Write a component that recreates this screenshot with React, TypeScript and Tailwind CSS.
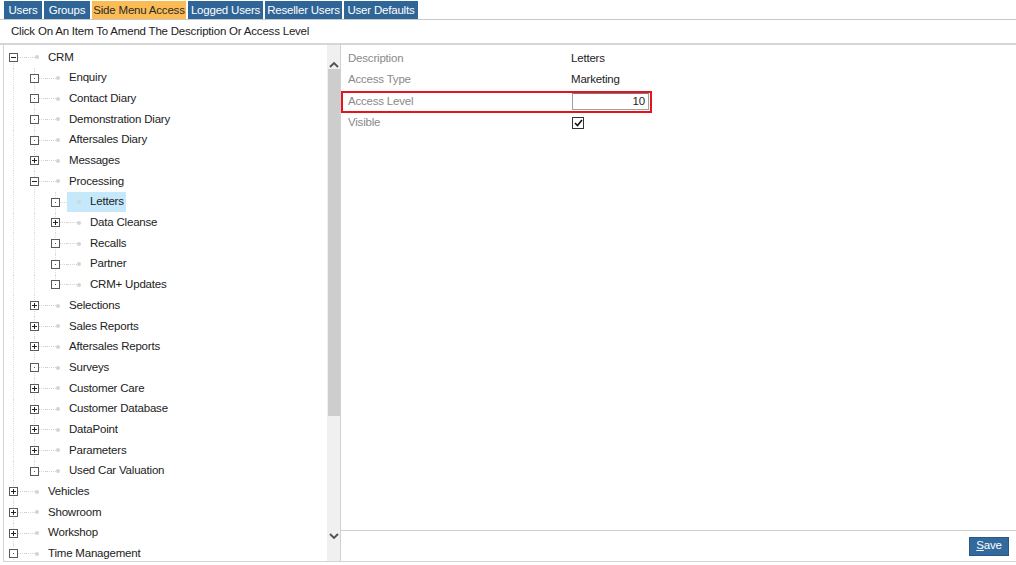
import React from 'react';

type Node = {
  label: string;
  kind: 'open' | 'closed' | 'leaf';
  selected?: boolean;
  children?: Node[];
};

const tree: Node[] = [
  {
    label: 'CRM',
    kind: 'open',
    children: [
      { label: 'Enquiry', kind: 'leaf' },
      { label: 'Contact Diary', kind: 'leaf' },
      { label: 'Demonstration Diary', kind: 'leaf' },
      { label: 'Aftersales Diary', kind: 'leaf' },
      { label: 'Messages', kind: 'closed' },
      {
        label: 'Processing',
        kind: 'open',
        children: [
          { label: 'Letters', kind: 'leaf', selected: true },
          { label: 'Data Cleanse', kind: 'closed' },
          { label: 'Recalls', kind: 'leaf' },
          { label: 'Partner', kind: 'leaf' },
          { label: 'CRM+ Updates', kind: 'leaf' },
        ],
      },
      { label: 'Selections', kind: 'closed' },
      { label: 'Sales Reports', kind: 'closed' },
      { label: 'Aftersales Reports', kind: 'closed' },
      { label: 'Surveys', kind: 'leaf' },
      { label: 'Customer Care', kind: 'closed' },
      { label: 'Customer Database', kind: 'closed' },
      { label: 'DataPoint', kind: 'closed' },
      { label: 'Parameters', kind: 'closed' },
      { label: 'Used Car Valuation', kind: 'leaf' },
    ],
  },
  { label: 'Vehicles', kind: 'closed' },
  { label: 'Showroom', kind: 'closed' },
  { label: 'Workshop', kind: 'closed' },
  { label: 'Time Management', kind: 'leaf' },
];

type Row = { node: Node; level: number; guides: boolean[]; first: boolean; last: boolean };

function flatten(nodes: Node[], level: number, guides: boolean[], out: Row[]) {
  nodes.forEach((node, i) => {
    const last = i === nodes.length - 1;
    out.push({ node, level, guides, first: level === 0 && i === 0, last: last && level > 0 });
    if (node.kind === 'open' && node.children) {
      flatten(node.children, level + 1, [...guides, !last], out);
    }
  });
  return out;
}

const rows = flatten(tree, 0, [], []);

const padByLevel = ['pl-[5px]', 'pl-[26px]', 'pl-[47px]'];
const guideLeft = ['left-[9px]', 'left-[30px]', 'left-[51px]'];

const tabs = [
  { label: 'Users', w: 'w-[38px]' },
  { label: 'Groups', w: 'w-[46px]' },
  { label: 'Side Menu Access', w: 'w-[94px]', active: true },
  { label: 'Logged Users', w: 'w-[75px]' },
  { label: 'Reseller Users', w: 'w-[77px]' },
  { label: 'User Defaults', w: 'w-[74px]' },
];

function ToggleBox({ kind }: { kind: Node['kind'] }) {
  return (
    <div className="relative z-10 w-[9px] h-[9px] shrink-0 border border-[#5a5a5a] bg-white flex items-center justify-center">
      {kind === 'leaf' && <div className="w-[1px] h-[1px] bg-[#555]" />}
      {kind !== 'leaf' && <div className="absolute w-[5px] h-[1px] bg-[#222]" />}
      {kind === 'closed' && <div className="absolute w-[1px] h-[5px] bg-[#222]" />}
    </div>
  );
}

function TreeRow({ row }: { row: Row }) {
  const { node, level, guides, first, last } = row;
  return (
    <div className={`relative flex items-center h-[20.7px] ${padByLevel[level]}`}>
      {guides.map((g, i) =>
        g ? <span key={i} className={`absolute top-0 bottom-0 border-l border-dotted border-[#dcdcdc] ${guideLeft[i]}`} /> : null
      )}
      {!first && <span className={`absolute top-0 h-[50%] border-l border-dotted border-[#dcdcdc] ${guideLeft[level]}`} />}
      {!last && <span className={`absolute top-[50%] bottom-0 border-l border-dotted border-[#dcdcdc] ${guideLeft[level]}`} />}
      <ToggleBox kind={node.kind} />
      <div className="w-[7px] border-t border-dotted border-[#d6d6d6]" />
      <div className={`flex items-center h-[20px] pr-[2px] ${node.selected ? 'bg-[#c5e9fb]' : ''}`}>
        <div className={`w-[10px] border-t border-dotted ${node.selected ? 'border-transparent' : 'border-[#d6d6d6]'}`} />
        <div className="w-[4px] h-[4px] rounded-full bg-[#d4d4d4]" />
        <span className="ml-[9px] text-[#222] whitespace-nowrap">{node.label}</span>
      </div>
    </div>
  );
}

function Field({ label, children, boxed }: { label: string; children: React.ReactNode; boxed?: boolean }) {
  return (
    <div className={`flex items-center ${boxed ? 'h-[22px] w-[311px] border-2 border-[#e3141b] -ml-[7px] pl-[5px]' : 'h-[21.3px]'}`}>
      <div className="w-[223px] text-[#8a8a8a]">{label}</div>
      <div className="text-[#1e1e1e]">{children}</div>
    </div>
  );
}

export default function App() {
  return (
    <div
      className="w-[1016px] h-[565px] bg-white overflow-hidden text-[11.5px] tracking-[-0.2px] leading-none"
      style={{ fontFamily: '"Liberation Sans", Arial, sans-serif' }}
    >
      {/* Tabs */}
      <div className="flex gap-[2px] pl-[4px] pt-[1px] h-[20px] border-b border-[#c9c9c9]">
        {tabs.map(t => (
          <div
            key={t.label}
            className={`${t.w} h-[18px] pt-[1px] flex items-center justify-center whitespace-nowrap ${
              t.active ? 'bg-[#fbbc55] text-[#2a2a2a]' : 'bg-[#2f6597] text-white'
            }`}
          >
            {t.label}
          </div>
        ))}
      </div>

      {/* Instruction */}
      <div className="h-[25px] flex items-center pl-[11px] text-[#222] border-b-2 border-[#d6d6d6]">
        Click On An Item To Amend The Description Or Access Level
      </div>

      {/* Main */}
      <div className="flex h-[517px] ml-[3px] border-l border-b border-[#d4d4d4]">
        {/* Tree */}
        <div className="w-[323px] overflow-hidden pt-[2px]">
          {rows.map((r, i) => (
            <TreeRow key={i} row={r} />
          ))}
        </div>

        {/* Scrollbar */}
        <div className="w-[14px] bg-[#f0f0f0] flex flex-col items-center border-r border-[#d0d0d0]">
          <div className="h-[24px] flex items-end pb-[1px]">
            <svg width="10" height="7" viewBox="0 0 10 7">
              <path d="M1 6 L5 2 L9 6" fill="none" stroke="#505050" strokeWidth="1.8" />
            </svg>
          </div>
          <div className="w-[12px] h-[347px] bg-[#cdcdcd]" />
          <div className="flex-1" />
          <div className="h-[30px] flex items-start pt-[2px]">
            <svg width="10" height="7" viewBox="0 0 10 7">
              <path d="M1 1 L5 5 L9 1" fill="none" stroke="#505050" strokeWidth="1.8" />
            </svg>
          </div>
        </div>

        {/* Details */}
        <div className="flex-1 flex flex-col">
          <div className="flex-1 pl-[7px] pt-[3px]">
            <Field label="Description">Letters</Field>
            <Field label="Access Type">Marketing</Field>
            <Field label="Access Level" boxed>
              <div className="w-[77px] h-[17px] ml-[1px] border border-[#a0a0a0] border-t-[#7a7a7a] bg-white flex items-center justify-end pr-[3px]">
                10
              </div>
            </Field>
            <Field label="Visible">
              <div className="w-[12px] h-[12px] ml-[1px] border border-[#333] bg-white flex items-center justify-center">
                <svg width="9" height="8" viewBox="0 0 9 8">
                  <path d="M1 4 L3.5 6.5 L8 1" fill="none" stroke="#111" strokeWidth="1.6" />
                </svg>
              </div>
            </Field>
          </div>
          <div className="h-[31px] border-t border-[#cfcfcf] flex items-center justify-end pr-[7px]">
            <button className="w-[40px] h-[19px] bg-[#336a9e] border border-[#2a5785] text-white flex items-center justify-center">
              <span><span className="underline">S</span>ave</span>
            </button>
          </div>
        </div>
      </div>
    </div>
  );
}
